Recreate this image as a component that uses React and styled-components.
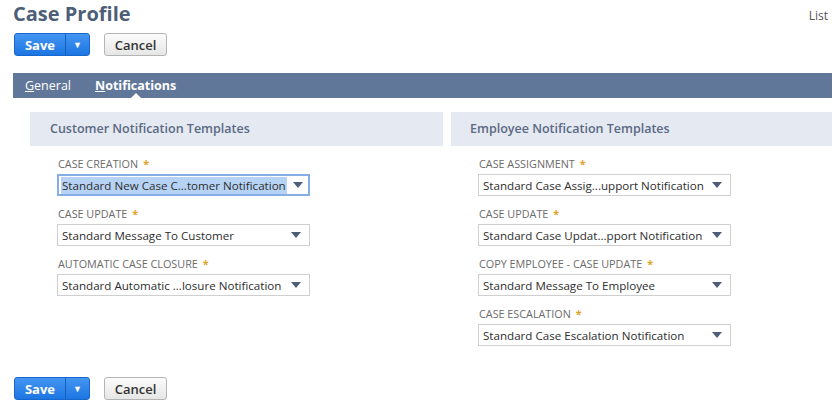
import React from "react";
import styled, { createGlobalStyle } from "styled-components";

const GlobalStyle = createGlobalStyle`
  html, body {
    margin: 0;
    padding: 0;
    background: #fff;
    font-family: "Open Sans", "Liberation Sans", sans-serif;
  }
`;

const Page = styled.div`
  width: 837px;
  height: 418px;
  padding: 0 5px 0 13px;
  box-sizing: border-box;
  overflow: hidden;
`;

const Header = styled.div`
  display: flex;
  justify-content: space-between;
  align-items: flex-start;
`;

const Title = styled.h1`
  margin: 0;
  font-size: 20px;
  line-height: 27px;
  font-weight: 700;
  color: #4e5e78;
`;

const ListLink = styled.span`
  font-size: 12px;
  color: #555;
  margin: 7px 4px 0 0;
`;

const ButtonBar = styled.div`
  display: flex;
  gap: 14px;
  margin: ${({ bottom }) => (bottom ? "31px 0 0 1px" : "6px 0 0 1px")};
`;

const SplitButton = styled.div`
  display: flex;
  height: 23px;
  border: 1px solid #1768cc;
  border-radius: 3px;
  background: linear-gradient(#4596f2, #1c75e2);
  box-sizing: border-box;
  overflow: hidden;
`;

const SaveLabel = styled.button`
  width: 50px;
  border: none;
  background: transparent;
  color: #fff;
  font-family: inherit;
  font-size: 13px;
  font-weight: 700;
  padding: 0;
  cursor: pointer;
`;

const ArrowPart = styled.button`
  width: 24px;
  border: none;
  border-left: 1px solid #1560bd;
  background: transparent;
  color: #fff;
  font-size: 9px;
  padding: 0;
  cursor: pointer;
`;

const CancelButton = styled.button`
  width: 63px;
  height: 23px;
  border: 1px solid #b4b4b4;
  border-radius: 3px;
  background: linear-gradient(#fbfbfb, #e6e6e6);
  color: #333;
  font-family: inherit;
  font-size: 13px;
  font-weight: 600;
  padding: 0;
  cursor: pointer;
`;

const TabBar = styled.div`
  margin-top: 17px;
  height: 25px;
  background: #607799;
  display: flex;
  align-items: center;
  padding-left: 12px;
  gap: 24px;
`;

const Tab = styled.span`
  position: relative;
  color: #fff;
  font-size: 12.5px;
  font-weight: ${({ active }) => (active ? 700 : 400)};
  line-height: 25px;

  ${({ active }) =>
    active &&
    `
    &::after {
      content: "";
      position: absolute;
      left: 50%;
      bottom: 0;
      margin-left: -5px;
      border-left: 5px solid transparent;
      border-right: 5px solid transparent;
      border-bottom: 5px solid #fff;
    }
  `}
`;

const Key = styled.span`
  text-decoration: underline;
`;

const Columns = styled.div`
  display: grid;
  grid-template-columns: 413px 1fr;
  gap: 8px;
  margin: 14px 0 0 17px;
`;

const Panel = styled.div`
  display: flex;
  flex-direction: column;
`;

const PanelHeader = styled.div`
  height: 34px;
  background: #e5e9f1;
  color: #5a6a84;
  font-size: 12.5px;
  font-weight: 600;
  line-height: 34px;
  padding-left: ${({ right }) => (right ? "19px" : "20px")};
`;

const Fields = styled.div`
  display: flex;
  flex-direction: column;
  gap: 11px;
  padding: 11px 0 0 27px;
`;

const Field = styled.div`
  display: flex;
  flex-direction: column;
`;

const Label = styled.label`
  font-size: 10.8px;
  line-height: 14px;
  color: #6b6b6b;
  text-transform: uppercase;
  margin-bottom: 3px;
  padding-left: 1px;
`;

const Star = styled.span`
  color: #e2a32a;
  margin-left: 5px;
  font-weight: 700;
`;

const Select = styled.div`
  width: 253px;
  height: 22px;
  box-sizing: border-box;
  border: ${({ focused }) => (focused ? "2px solid #86aee6" : "1px solid #cfcfcf")};
  display: flex;
  align-items: center;
  justify-content: space-between;
  padding: ${({ focused }) => (focused ? "0 7px 0 2px" : "0 8px 0 3px")};
  font-size: 11.6px;
  color: #2e2e2e;
  white-space: nowrap;
`;

const Value = styled.span`
  background: ${({ focused }) => (focused ? "#b6d3f5" : "transparent")};
  padding: 0 1px;
  line-height: 17px;
`;

const Caret = styled.span`
  flex-shrink: 0;
  width: 0;
  height: 0;
  margin-left: 6px;
  border-left: 5px solid transparent;
  border-right: 5px solid transparent;
  border-top: 6px solid #4e5e78;
`;

const customerFields = [
  { label: "Case Creation", value: "Standard New Case C...tomer Notification", focused: true },
  { label: "Case Update", value: "Standard Message To Customer" },
  { label: "Automatic Case Closure", value: "Standard Automatic ...losure Notification" },
];

const employeeFields = [
  { label: "Case Assignment", value: "Standard Case Assig...upport Notification" },
  { label: "Case Update", value: "Standard Case Updat...pport Notification" },
  { label: "Copy Employee - Case Update", value: "Standard Message To Employee" },
  { label: "Case Escalation", value: "Standard Case Escalation Notification" },
];

function Buttons({ bottom }) {
  return (
    <ButtonBar bottom={bottom}>
      <SplitButton>
        <SaveLabel>Save</SaveLabel>
        <ArrowPart>▼</ArrowPart>
      </SplitButton>
      <CancelButton>Cancel</CancelButton>
    </ButtonBar>
  );
}

function FieldList({ items }) {
  return (
    <Fields>
      {items.map((f) => (
        <Field key={f.label}>
          <Label>
            {f.label}
            <Star>*</Star>
          </Label>
          <Select focused={f.focused}>
            <Value focused={f.focused}>{f.value}</Value>
            <Caret />
          </Select>
        </Field>
      ))}
    </Fields>
  );
}

export default function App() {
  return (
    <>
      <GlobalStyle />
      <Page>
        <Header>
          <Title>Case Profile</Title>
          <ListLink>List</ListLink>
        </Header>
        <Buttons />
        <TabBar>
          <Tab>
            <Key>G</Key>eneral
          </Tab>
          <Tab active>
            <Key>N</Key>otifications
          </Tab>
        </TabBar>
        <Columns>
          <Panel>
            <PanelHeader>Customer Notification Templates</PanelHeader>
            <FieldList items={customerFields} />
          </Panel>
          <Panel>
            <PanelHeader right>Employee Notification Templates</PanelHeader>
            <FieldList items={employeeFields} />
          </Panel>
        </Columns>
        <Buttons bottom />
      </Page>
    </>
  );
}
